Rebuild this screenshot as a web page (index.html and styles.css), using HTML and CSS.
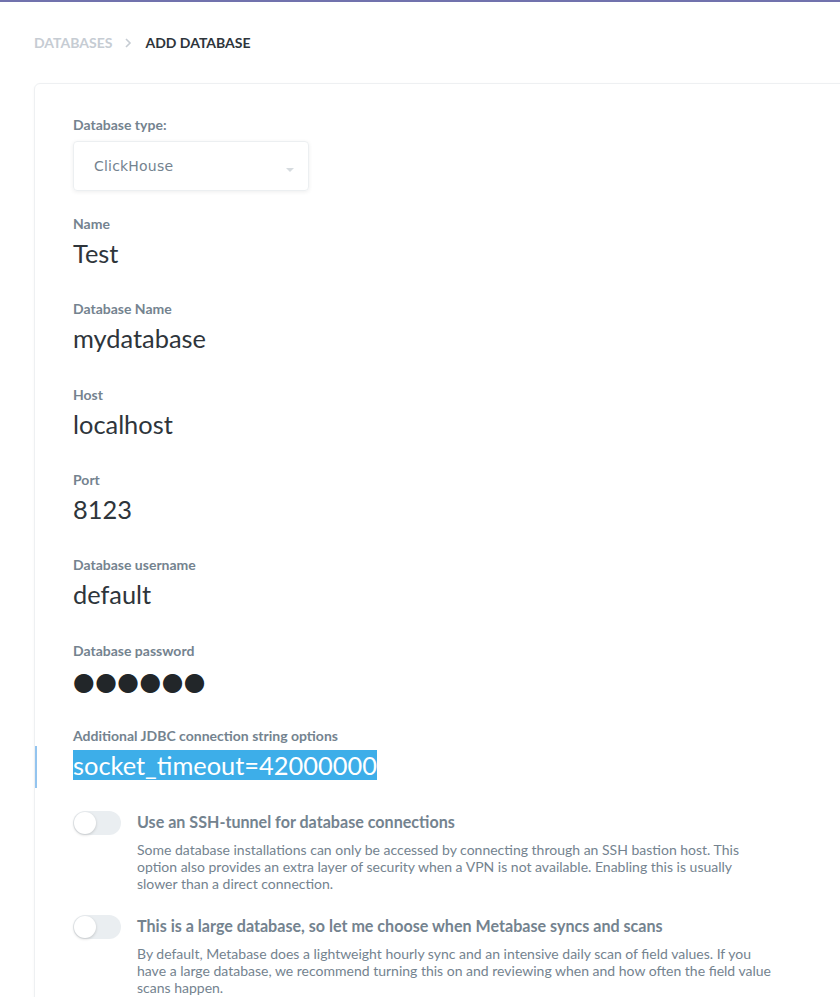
FILE: index.html
```html
<!DOCTYPE html>
<html>
<head>
<meta charset="utf-8">
<link rel="stylesheet" href="styles.css">
</head>
<body>
<div class="topbar"></div>
<div class="page">
  <nav class="breadcrumb">
    <span class="crumb-muted">Databases</span>
    <svg class="chev" width="8" height="10" viewBox="0 0 8 10"><path d="M2 1 L6 5 L2 9" fill="none" stroke="#c6ccd3" stroke-width="1.6"/></svg>
    <span class="crumb-current">Add Database</span>
  </nav>
  <div class="card">
    <div class="type-field">
      <div class="label">Database type:</div>
      <div class="select">
        <span class="select-text">ClickHouse</span>
        <svg class="select-arrow" width="8" height="4" viewBox="0 0 8 4"><path d="M0 0 L8 0 L4 4 Z" fill="#d6dbdf"/></svg>
      </div>
    </div>
    <div class="field">
      <div class="label">Name</div>
      <div class="value">Test</div>
    </div>
    <div class="field">
      <div class="label">Database Name</div>
      <div class="value">mydatabase</div>
    </div>
    <div class="field">
      <div class="label">Host</div>
      <div class="value">localhost</div>
    </div>
    <div class="field">
      <div class="label">Port</div>
      <div class="value">8123</div>
    </div>
    <div class="field">
      <div class="label">Database username</div>
      <div class="value">default</div>
    </div>
    <div class="field">
      <div class="label">Database password</div>
      <div class="value dots">●●●●●●</div>
    </div>
    <div class="field focused">
      <div class="label">Additional JDBC connection string options</div>
      <div class="value"><span class="selected">socket_timeout=42000000</span></div>
    </div>
    <div class="option">
      <div class="toggle"><div class="knob"></div></div>
      <div class="option-body">
        <div class="option-title">Use an SSH-tunnel for database connections</div>
        <div class="option-desc">Some database installations can only be accessed by connecting through an SSH bastion host. This option also provides an extra layer of security when a VPN is not available. Enabling this is usually slower than a direct connection.</div>
      </div>
    </div>
    <div class="option">
      <div class="toggle"><div class="knob"></div></div>
      <div class="option-body">
        <div class="option-title">This is a large database, so let me choose when Metabase syncs and scans</div>
        <div class="option-desc">By default, Metabase does a lightweight hourly sync and an intensive daily scan of field values. If you have a large database, we recommend turning this on and reviewing when and how often the field value scans happen.</div>
      </div>
    </div>
  </div>
</div>
</body>
</html>
```
FILE: styles.css
```css
html, body {
  margin: 0;
  padding: 0;
  background: #ffffff;
  overflow: hidden;
}
body {
  font-family: Lato, "Noto Sans", sans-serif;
  color: #2e353b;
}
.topbar {
  height: 2px;
  background: #7172ad;
}
.page {
  padding-left: 34px;
}
.breadcrumb {
  display: flex;
  align-items: center;
  gap: 12px;
  padding-top: 31px;
  height: 20px;
  font-size: 14px;
  font-weight: 700;
  text-transform: uppercase;
  line-height: 20px;
}
.crumb-muted {
  color: #c6ccd3;
}
.chev {
  margin: 0 1px 0 0;
}
.crumb-current {
  color: #2e353b;
}
.card {
  margin-top: 30px;
  width: 900px;
  border: 1px solid #eef0f2;
  border-radius: 6px;
  box-shadow: 0 1px 3px rgba(0, 0, 0, 0.04);
  padding: 31px 38px 40px 38px;
  position: relative;
}
.label {
  font-size: 14px;
  font-weight: 700;
  color: #74838f;
  line-height: 20px;
}
.type-field {
  margin-bottom: 23px;
}
.select {
  margin-top: 6px;
  height: 48px;
  border: 1px solid #eceff1;
  border-radius: 4px;
  box-shadow: 0 1px 4px rgba(0, 0, 0, 0.07);
  display: flex;
  align-items: center;
  justify-content: space-between;
  padding: 0 14px 0 20px;
  box-sizing: content-box;
  width: 200px;
}
.select-text {
  font-family: "DejaVu Sans", sans-serif;
  font-size: 14px;
  color: #74838f;
  letter-spacing: 0.2px;
}
.select-arrow {
  margin-top: 8px;
}
.field {
  position: relative;
  margin-bottom: 29.33px;
}
.value {
  margin-top: 4px;
  font-size: 25.4px;
  line-height: 31px;
  height: 32px;
  color: #2e353b;
}
.dots {
  font-family: "DejaVu Sans", sans-serif;
  font-size: 25px;
  line-height: 34px;
  letter-spacing: 0.35px;
  color: #222629;
}
.focused::before {
  content: "";
  position: absolute;
  left: -38px;
  top: 20px;
  width: 2px;
  height: 42px;
  background: #93c4ef;
}
.selected {
  background: #3daee9;
  color: #ffffff;
  padding: 0;
}
.option {
  display: flex;
  gap: 16px;
  margin-bottom: 23.5px;
  align-items: flex-start;
}
.toggle {
  flex: none;
  width: 48px;
  height: 24px;
  border-radius: 12px;
  background: #eaeef1;
  position: relative;
}
.knob {
  position: absolute;
  left: 1px;
  top: 1px;
  width: 22px;
  height: 22px;
  border-radius: 50%;
  background: #ffffff;
  box-shadow: 0 1px 3px rgba(0, 0, 0, 0.18);
}
.option-body {
  width: 636px;
}
.option-title {
  font-size: 16.1px;
  font-weight: 700;
  color: #74838f;
  line-height: 22px;
}
.option-desc {
  margin-top: 7.5px;
  font-size: 14px;
  line-height: 17px;
  color: #74838f;
}
```
